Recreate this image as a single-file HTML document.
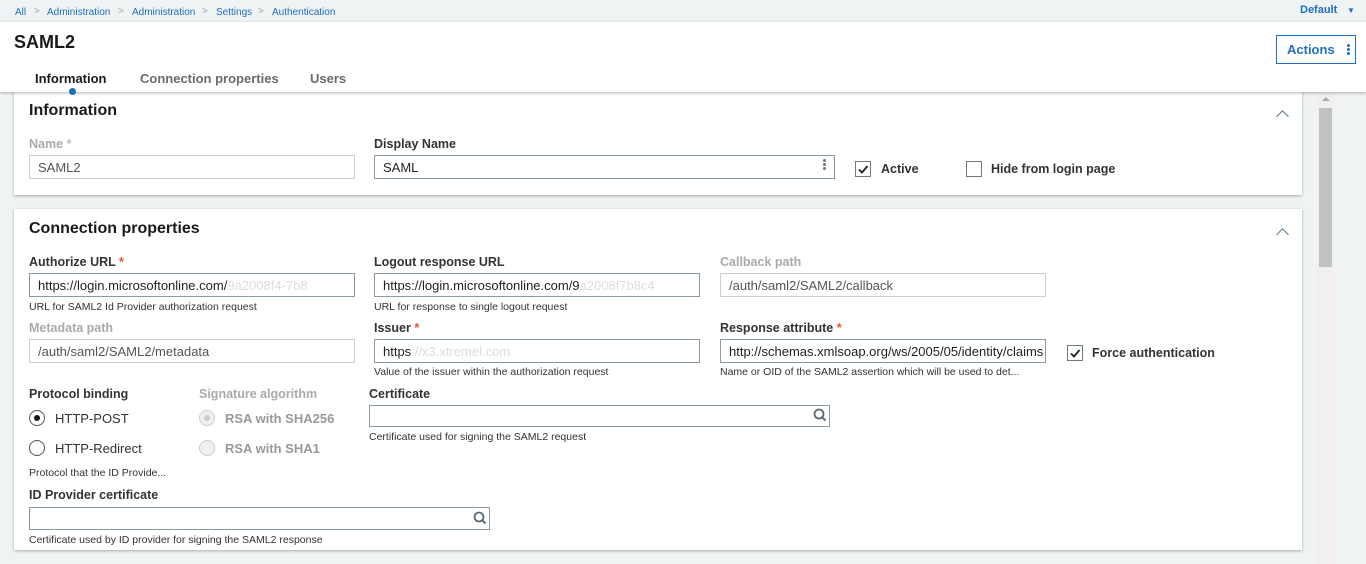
<!DOCTYPE html>
<html><head><meta charset="utf-8"><style>
*{box-sizing:border-box;margin:0;padding:0}
body{width:1366px;height:564px;overflow:hidden;background:#f0f3f4;font-family:"Liberation Sans",sans-serif;color:#1f1f1f;position:relative}
.a{position:absolute;white-space:nowrap}
.bc{font-size:10px;color:#1e6fc0;top:7px}
.sep{font-size:10px;color:#9aa;top:6px}
.card{position:absolute;left:14px;width:1288px;background:#fff;box-shadow:0 1px 3px rgba(0,0,0,.3)}
.h2{font-size:16px;font-weight:bold;color:#1a1a1a}
.lb{font-size:12.5px;font-weight:bold;color:#333}
.lb.dis{color:#aaa}
.st{color:#e8532b}
.in{position:absolute;height:24px;border:1px solid #8a9aa5;background:#fff;font-size:13px;color:#222;padding:4px 8px;overflow:hidden;white-space:nowrap}
.in.dis{border-color:#c8d0d5;color:#555}
.hp{font-size:10.5px;color:#333}
.cb{position:absolute;width:16px;height:16px;border:1px solid #6a7a85;background:#fff}
.cb svg{position:absolute;left:1px;top:1px}
.rd{position:absolute;width:16px;height:16px;border:1px solid #555;border-radius:50%;background:#fff}
.rd.dis{border-color:#ccc;background:#f0f0f0}
.chev{position:absolute;width:9px;height:9px;border-left:1.5px solid #5a7a90;border-top:1.5px solid #5a7a90;transform:rotate(45deg)}
.mag{position:absolute}
</style></head><body>
<div class="a bc" style="left:15px">All</div>
<div class="a sep" style="left:34px">&gt;</div>
<div class="a bc" style="left:47px">Administration</div>
<div class="a sep" style="left:118px">&gt;</div>
<div class="a bc" style="left:132px">Administration</div>
<div class="a sep" style="left:202px">&gt;</div>
<div class="a bc" style="left:216px">Settings</div>
<div class="a sep" style="left:258px">&gt;</div>
<div class="a bc" style="left:272px">Authentication</div>
<div class="a" style="left:1300px;top:4px;font-size:11px;font-weight:bold;color:#1e6fc0">Default</div>
<div class="a" style="left:1347px;top:6px;font-size:8px;color:#1e6fc0">▼</div>
<div style="position:absolute;left:0;top:22px;width:1366px;height:70px;background:#fff;box-shadow:0 1px 3px rgba(0,0,0,.3);z-index:2">
<div class="a" style="left:14px;top:10px;font-size:18px;font-weight:bold;color:#1a1a1a">SAML2</div>
<div class="a" style="left:1276px;top:13px;width:80px;height:29px;border:1.5px solid #1e6fc0"></div>
<div class="a" style="left:1287px;top:20px;font-size:13px;font-weight:bold;color:#1e6fc0">Actions</div>
<div class="a" style="left:1347px;top:22px;width:3px;height:3px;border-radius:50%;background:#1e6fc0;box-shadow:0 4px 0 #1e6fc0,0 8px 0 #1e6fc0"></div>
<div class="a" style="left:35px;top:49px;font-size:13px;font-weight:bold;color:#1a1a1a">Information</div>
<div class="a" style="left:140px;top:49px;font-size:13px;font-weight:bold;color:#6b6b6b">Connection properties</div>
<div class="a" style="left:310px;top:49px;font-size:13px;font-weight:bold;color:#6b6b6b">Users</div>
<div class="a" style="left:69px;top:66px;width:7px;height:7px;border-radius:50%;background:#1e6fc0"></div>
</div>
<div class="a" style="left:1317px;top:92px;width:17px;height:472px;background:#f1eff0"></div>
<div class="a" style="left:1322px;top:97px;width:0;height:0;border-left:4px solid transparent;border-right:4px solid transparent;border-bottom:4px solid #aaa"></div>
<div class="a" style="left:1319px;top:108px;width:13px;height:159px;background:#c1c1c1"></div>
<div class="card" style="top:86px;height:109px;z-index:1"></div>
<div style="position:absolute;left:0;top:0;z-index:1">
<div class="a h2" style="left:29px;top:102px">Information</div>
<div class="chev" style="left:1278px;top:112px"></div>
<div class="a lb dis" style="left:29px;top:137px">Name <span style="color:#bbb">*</span></div>
<div class="in dis" style="left:29px;top:155px;width:326px">SAML2</div>
<div class="a lb" style="left:374px;top:137px">Display Name</div>
<div class="in" style="left:374px;top:155px;width:461px">SAML</div>
<div class="a" style="left:823px;top:159px;width:3px;height:3px;border-radius:50%;background:#6a7a85;box-shadow:0 4px 0 #6a7a85,0 8px 0 #6a7a85"></div>
<div class="cb" style="left:855px;top:161px"><svg width="12" height="12"><path d="M2 6.5 L5 9.5 L10.5 3" stroke="#222" stroke-width="1.8" fill="none"/></svg></div>
<div class="a lb" style="left:881px;top:162px">Active</div>
<div class="cb" style="left:966px;top:161px"></div>
<div class="a lb" style="left:991px;top:162px">Hide from login page</div>
</div>
<div class="card" style="top:209px;height:341px"></div>
<div class="a h2" style="left:29px;top:220px">Connection properties</div>
<div class="chev" style="left:1278px;top:230px"></div>

<div class="a lb" style="left:29px;top:255px">Authorize URL <span class="st">*</span></div>
<div class="in" style="left:29px;top:273px;width:326px">https://login.microsoftonline.com/<span style="color:#ddd">9a2008f4-7b8</span></div>
<div class="a hp" style="left:29px;top:301px">URL for SAML2 Id Provider authorization request</div>
<div class="a lb" style="left:374px;top:255px">Logout response URL</div>
<div class="in" style="left:374px;top:273px;width:326px">https://login.microsoftonline.com/9<span style="color:#ddd">a2008f7b8c4</span></div>
<div class="a hp" style="left:374px;top:301px">URL for response to single logout request</div>
<div class="a lb dis" style="left:720px;top:255px">Callback path</div>
<div class="in dis" style="left:720px;top:273px;width:326px">/auth/saml2/SAML2/callback</div>

<div class="a lb dis" style="left:29px;top:321px">Metadata path</div>
<div class="in dis" style="left:29px;top:339px;width:326px">/auth/saml2/SAML2/metadata</div>
<div class="a lb" style="left:374px;top:321px">Issuer <span class="st">*</span></div>
<div class="in" style="left:374px;top:339px;width:326px">https<span style="color:#ddd">://x3.xtremel.com</span></div>
<div class="a hp" style="left:374px;top:366px">Value of the issuer within the authorization request</div>
<div class="a lb" style="left:720px;top:321px">Response attribute <span class="st">*</span></div>
<div class="in" style="left:720px;top:339px;width:326px">http://schemas.xmlsoap.org/ws/2005/05/identity/claims</div>
<div class="a hp" style="left:720px;top:366px">Name or OID of the SAML2 assertion which will be used to det...</div>
<div class="cb" style="left:1067px;top:345px"><svg width="12" height="12"><path d="M2 6.5 L5 9.5 L10.5 3" stroke="#222" stroke-width="1.8" fill="none"/></svg></div>
<div class="a lb" style="left:1092px;top:346px">Force authentication</div>

<div class="a lb" style="left:29px;top:387px">Protocol binding</div>
<div class="rd" style="left:29px;top:410px"><div style="position:absolute;left:4px;top:4px;width:6px;height:6px;border-radius:50%;background:#111"></div></div>
<div class="a" style="left:55px;top:411px;font-size:13px;color:#333">HTTP-POST</div>
<div class="rd" style="left:29px;top:440px"></div>
<div class="a" style="left:55px;top:441px;font-size:13px;color:#333">HTTP-Redirect</div>
<div class="a hp" style="left:29px;top:467px">Protocol that the ID Provide...</div>
<div class="a lb dis" style="left:199px;top:387px">Signature algorithm</div>
<div class="rd dis" style="left:199px;top:410px"><div style="position:absolute;left:4px;top:4px;width:6px;height:6px;border-radius:50%;background:#ccc"></div></div>
<div class="a" style="left:225px;top:411px;font-size:13px;font-weight:bold;color:#999">RSA with SHA256</div>
<div class="rd dis" style="left:199px;top:440px"></div>
<div class="a" style="left:225px;top:441px;font-size:13px;font-weight:bold;color:#999">RSA with SHA1</div>

<div class="a lb" style="left:369px;top:387px">Certificate</div>
<div class="in" style="left:369px;top:405px;width:461px;height:22px"></div>
<svg class="mag" style="left:813px;top:408px" width="14" height="14"><circle cx="6" cy="6" r="4.5" stroke="#5a6a75" stroke-width="1.8" fill="none"/><path d="M9.2 9.2 L12.5 12.5" stroke="#5a6a75" stroke-width="2"/></svg>
<div class="a hp" style="left:369px;top:431px">Certificate used for signing the SAML2 request</div>

<div class="a lb" style="left:29px;top:488px">ID Provider certificate</div>
<div class="in" style="left:29px;top:507px;width:461px;height:23px"></div>
<svg class="mag" style="left:473px;top:511px" width="14" height="14"><circle cx="6" cy="6" r="4.5" stroke="#5a6a75" stroke-width="1.8" fill="none"/><path d="M9.2 9.2 L12.5 12.5" stroke="#5a6a75" stroke-width="2"/></svg>
<div class="a hp" style="left:29px;top:534px">Certificate used by ID provider for signing the SAML2 response</div>
</body></html>
